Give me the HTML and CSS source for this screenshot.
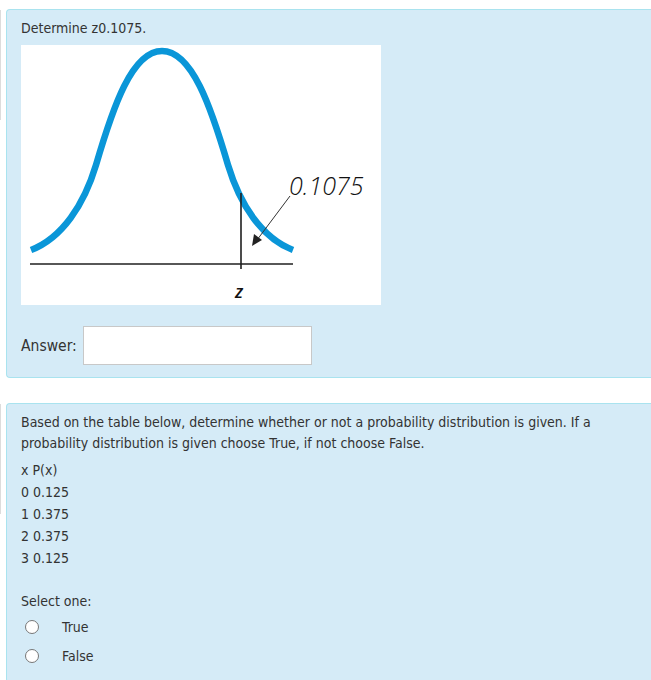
FILE: index.html
```html
<!DOCTYPE html>
<html>
<head>
<meta charset="utf-8">
<link rel="stylesheet" href="styles.css">
</head>
<body>
<div class="page">
  <div class="que first">
    <div class="info"></div>
    <div class="formulation">
      <p class="qtext">Determine z0.1075.</p>
      <div class="figure">
        <svg width="360" height="260" viewBox="0 0 360 260">
          <path d="M10,205 C41,193 63,160 75,120 C92,62 111,6 141,6 C171,6 190,62 207,120 C219,160 241,193 272,205" fill="none" stroke="#0a96d8" stroke-width="6.5"/>
          <line x1="9" y1="219" x2="272" y2="219" stroke="#1f1f1f" stroke-width="1.6"/>
          <line x1="220" y1="148" x2="220" y2="224" stroke="#1f1f1f" stroke-width="1.6"/>
          <line x1="269" y1="151" x2="236" y2="195" stroke="#333" stroke-width="1"/>
          <polygon points="231,201 233,189 241,195" fill="#222"/>
          <text x="268" y="150" class="lbl">0.1075</text>
          <text x="214" y="253" class="zlbl">z</text>
        </svg>
      </div>
      <div class="answer">
        <label class="alabel" for="ans">Answer:</label>
        <input id="ans" class="ainput" type="text">
      </div>
    </div>
  </div>

  <div class="que second">
    <div class="info"></div>
    <div class="formulation">
      <p class="qtext2">Based on the table below, determine whether or not a probability distribution is given. If a probability distribution is given choose True, if not choose False.</p>
      <div class="table">
        <div class="row">x P(x)</div>
        <div class="row">0 0.125</div>
        <div class="row">1 0.375</div>
        <div class="row">2 0.375</div>
        <div class="row">3 0.125</div>
      </div>
      <div class="select">Select one:</div>
      <div class="opt"><span class="radio"></span><span class="otext">True</span></div>
      <div class="opt"><span class="radio"></span><span class="otext">False</span></div>
    </div>
  </div>
</div>
</body>
</html>
```
FILE: styles.css
```css
html, body {
  margin: 0;
  padding: 0;
  overflow: hidden;
  background: #fff;
}
body {
  font-family: "DejaVu Sans Condensed", "DejaVu Sans", sans-serif;
  font-size: 14px;
  color: #333;
}
.page {
  padding-top: 9px;
  width: 651px;
}
.que {
  display: flex;
  align-items: flex-start;
}
.second {
  margin-top: 25px;
}
.info {
  width: 1px;
  height: 110px;
  margin-top: 1px;
  background: #dcdcdc;
  margin-right: 5px;
}
.formulation {
  flex: 1;
  min-width: 0;
  background: #d5ebf7;
  border: 1px solid #a9e3ef;
  border-right: 0;
  border-radius: 4px 0 0 4px;
  padding: 8px 14px 12px 14px;
}
.qtext {
  margin: 0;
  line-height: 20px;
}
.figure {
  margin-top: 7px;
  width: 360px;
  height: 260px;
  background: #fff;
}
.figure svg {
  display: block;
}
.lbl {
  font-family: "Open Sans", sans-serif;
  font-style: italic;
  font-weight: 300;
  font-size: 25px;
  fill: #111;
}
.zlbl {
  font-family: "Open Sans", sans-serif;
  font-style: italic;
  font-weight: 600;
  font-size: 18px;
  fill: #111;
}
.answer {
  display: flex;
  align-items: center;
  gap: 6px;
  margin-top: 21px;
}
.alabel {
  font-size: 15.5px;
}
.ainput {
  width: 229px;
  height: 39px;
  box-sizing: border-box;
  border: 1px solid #c8c8c8;
  background: #fff;
  margin: 0;
}
.qtext2 {
  margin: 0;
  width: 600px;
  line-height: 21px;
}
.table {
  margin-top: 5px;
}
.row {
  line-height: 22px;
}
.select {
  margin-top: 21px;
  line-height: 22px;
}
.opt {
  display: flex;
  align-items: center;
  height: 29px;
}
.radio {
  width: 12px;
  height: 12px;
  border: 1px solid #777;
  border-radius: 50%;
  background: #fff;
  margin-left: 4px;
  margin-right: 23px;
}
.otext {
  line-height: 22px;
}
```
